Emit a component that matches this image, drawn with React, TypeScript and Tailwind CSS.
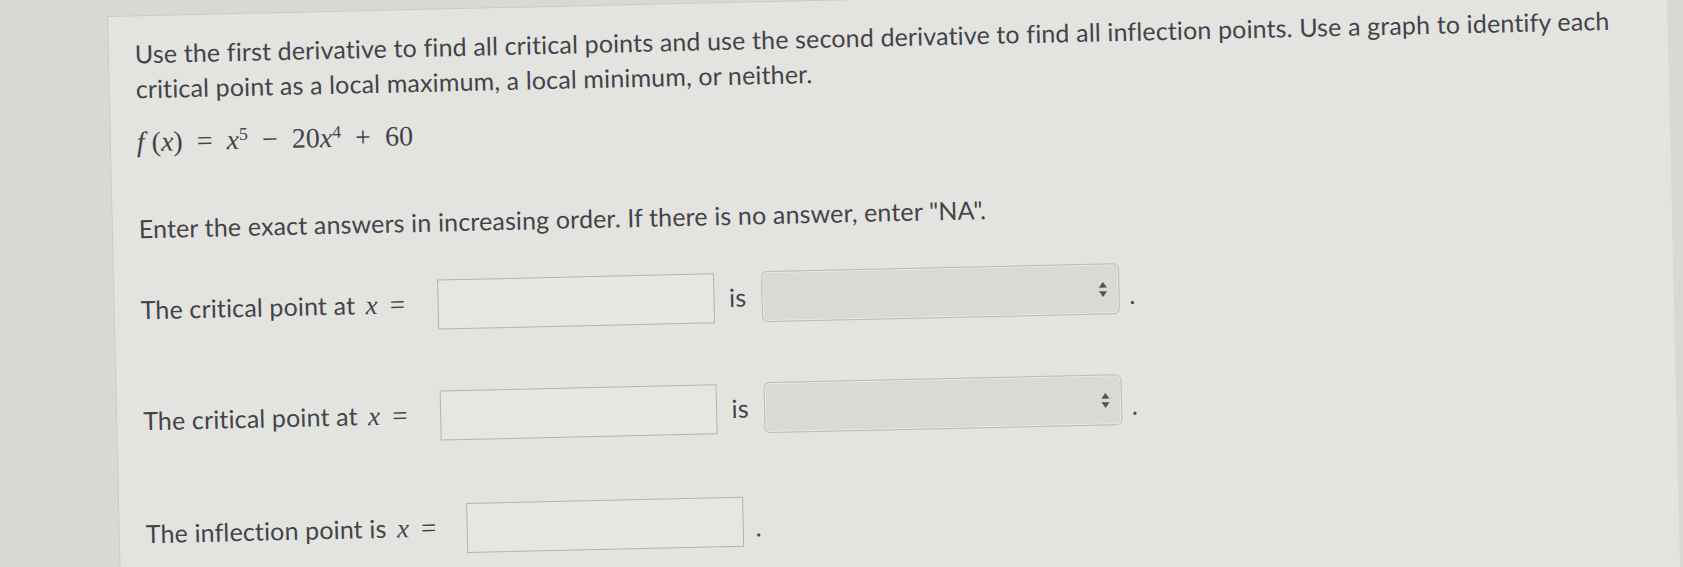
const mathFont = "font-['Liberation_Serif','Times_New_Roman',serif]";

function MathX() {
  return (
    <span className={`${mathFont} ml-[4px] text-[27px]`}>
      <i>x</i>
      <span className="ml-[12px]">=</span>
    </span>
  );
}

function AnswerBox({ className = "" }: { className?: string }) {
  return (
    <input
      type="text"
      aria-label="answer"
      className={`h-[50px] w-[277px] border border-[#b3b3af] bg-[#e6e6e3] outline-none ${className}`}
    />
  );
}

function ChoiceBox() {
  return (
    <div className="ml-[15px] flex h-[51px] w-[358px] items-center justify-end rounded-[6px] border border-[#bcbcb8] bg-[#d9d9d6] pr-[11px] shadow-[inset_0_0_0_1px_rgba(255,255,255,0.45)]">
      <svg width="9" height="16" viewBox="0 0 9 16" className="text-[#505055]">
        <path d="M0.5 6.2 L4.5 0.5 L8.5 6.2 Z" fill="currentColor" />
        <path d="M0.5 9.8 L8.5 9.8 L4.5 15.5 Z" fill="currentColor" />
      </svg>
    </div>
  );
}

export default function App() {
  return (
    <div className="h-[567px] w-full overflow-hidden bg-[#d8d8d4] pl-[107px] pt-[16px]">
      <div className="h-[640px] w-[1560px] origin-top-left rotate-[-1.3deg] border-l border-t border-[#c9c9c5] bg-[#e3e3e0] pl-[26px] pt-[20px] font-['Lato','Open_Sans',sans-serif] text-[25px] tracking-[0.15px] text-[#43434b]">
        <p className="w-[1500px] leading-[35px]">
          Use the first derivative to find all critical points and use the second derivative to find all inflection
          points. Use a graph to identify each critical point as a local maximum, a local minimum, or neither.
        </p>

        <p className={`mt-[18px] text-[28px] leading-[35px] tracking-normal ${mathFont}`}>
          <i>f</i> (<i>x</i>) <span className="mx-[7px]">=</span> <i>x</i>
          <sup className="text-[18px]">5</sup> <span className="mx-[7px]">−</span> 20<i>x</i>
          <sup className="text-[18px]">4</sup> <span className="mx-[7px]">+</span> 60
        </p>

        <p className="mt-[52px] leading-[35px]">
          Enter the exact answers in increasing order. If there is no answer, enter "NA".
        </p>

        <div className="mt-[39px] flex h-[51px] items-center">
          <span>
            The critical point at <MathX />
          </span>
          <AnswerBox className="ml-[32px]" />
          <span className="ml-[15px]">is</span>
          <ChoiceBox />
          <span className="ml-[10px] translate-y-[6px]">.</span>
        </div>

        <div className="mt-[60px] flex h-[51px] items-center">
          <span>
            The critical point at <MathX />
          </span>
          <AnswerBox className="ml-[32px]" />
          <span className="ml-[15px]">is</span>
          <ChoiceBox />
          <span className="ml-[10px] translate-y-[6px]">.</span>
        </div>

        <div className="mt-[62px] flex h-[51px] items-center">
          <span>
            The inflection point is <MathX />
          </span>
          <AnswerBox className="ml-[30px]" />
          <span className="ml-[12px] translate-y-[6px]">.</span>
        </div>
      </div>
    </div>
  );
}
